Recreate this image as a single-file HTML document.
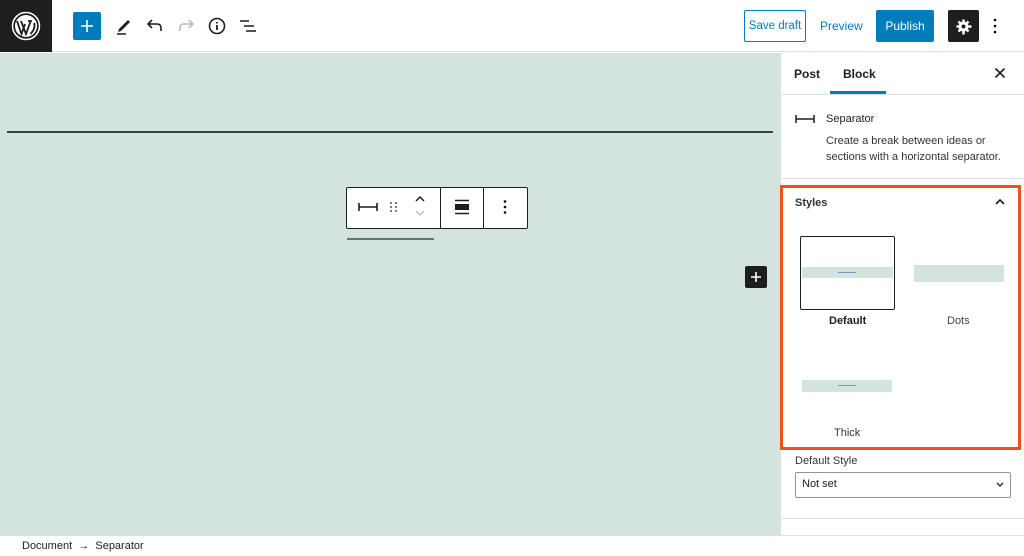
<!DOCTYPE html>
<html><head><style>
*{box-sizing:border-box;margin:0;padding:0}
body{width:1024px;height:556px;overflow:hidden;font-family:"Liberation Sans",sans-serif;background:#fff;position:relative;color:#1e1e1e}
.a{position:absolute}
</style></head><body>
<div class="a" style="left:0;top:0;width:1024px;height:52px;background:#fff;border-bottom:1px solid #e0e0e0"></div>
<div class="a" style="left:0;top:0;width:52px;height:52px;background:#1e1e1e"></div>
<svg class="a" style="left:11px;top:11px" width="30" height="30" viewBox="0 0 30 30"><circle cx="15" cy="15" r="13.5" fill="none" stroke="#fff" stroke-width="1.5"/><circle cx="15" cy="15" r="11" fill="#fff"/><path d="M6 10 L10.5 23 L14 13 M10 10 L15 23 L19 12 Q20 10 18 10 M17 10 L21 10 M23 12 Q25 17 19.5 23" stroke="#1e1e1e" stroke-width="1.8" fill="none"/></svg>
<div class="a" style="left:73px;top:12px;width:28px;height:28px;background:#007cba;border-radius:2px"></div>
<svg class="a" style="left:79px;top:18px" width="16" height="16"><path d="M8 2v12M2 8h12" stroke="#fff" stroke-width="1.6"/></svg>
<svg class="a" style="left:114px;top:16px" width="20" height="20"><path d="M5 13 L14 4 L16 6 L7 15 L4 16Z" fill="#1e1e1e"/><path d="M3 18h9" stroke="#1e1e1e" stroke-width="1.5"/></svg>
<svg class="a" style="left:145px;top:16px" width="20" height="20"><path d="M7 4 L3 8 L7 12 M3 8 H12 Q16 8 16 12 V15" stroke="#1e1e1e" stroke-width="1.6" fill="none"/></svg>
<svg class="a" style="left:176px;top:16px" width="20" height="20"><path d="M13 4 L17 8 L13 12 M17 8 H8 Q4 8 4 12 V15" stroke="#bbb" stroke-width="1.6" fill="none"/></svg>
<svg class="a" style="left:207px;top:16px" width="20" height="20"><circle cx="10" cy="10" r="7.5" stroke="#1e1e1e" stroke-width="1.6" fill="none"/><path d="M10 9v5M10 6v1.5" stroke="#1e1e1e" stroke-width="1.8"/></svg>
<svg class="a" style="left:238px;top:16px" width="20" height="20"><path d="M2 5h9M6 10h10M8 15h10" stroke="#1e1e1e" stroke-width="1.6"/></svg>
<div class="a" style="left:744px;top:10px;width:62px;height:32px;border:1px solid #007cba;border-radius:2px;color:#007cba;font-size:11.5px;line-height:30px;text-align:center;white-space:nowrap">Save draft</div>
<div class="a" style="left:820px;top:19px;color:#007cba;font-size:12px">Preview</div>
<div class="a" style="left:876px;top:10px;width:58px;height:32px;background:#007cba;border-radius:2px;color:#fff;font-size:12px;line-height:32px;text-align:center">Publish</div>
<div class="a" style="left:948px;top:10px;width:31px;height:32px;background:#1e1e1e;border-radius:2px"></div>
<svg class="a" style="left:955px;top:18px" width="17" height="17" viewBox="0 0 17 17"><circle cx="8.5" cy="8.5" r="5" fill="#fff"/><path d="M8.5 1.5v15M1.5 8.5h15M3.5 3.5l10 10M13.5 3.5l-10 10" stroke="#fff" stroke-width="2.5"/><circle cx="8.5" cy="8.5" r="2" fill="#1e1e1e"/></svg>
<svg class="a" style="left:990px;top:16px" width="10" height="20"><circle cx="5" cy="4" r="1.3"/><circle cx="5" cy="10" r="1.3"/><circle cx="5" cy="16" r="1.3"/></svg>
<div class="a" style="left:0;top:53px;width:780px;height:482px;background:#d3e3dd"></div>
<div class="a" style="left:7px;top:131px;width:766px;height:2px;background:#3b3f42"></div>
<div class="a" style="left:346px;top:187px;width:182px;height:42px;background:#fff;border:1px solid #1e1e1e;border-radius:2px"></div>
<div class="a" style="left:440px;top:188px;width:1px;height:40px;background:#1e1e1e"></div>
<div class="a" style="left:483px;top:188px;width:1px;height:40px;background:#1e1e1e"></div>
<svg class="a" style="left:358px;top:200px" width="20" height="14"><path d="M1 3v8M19 3v8M1 7h18" stroke="#1e1e1e" stroke-width="1.6"/></svg>
<svg class="a" style="left:388px;top:200px" width="12" height="14" fill="#555"><circle cx="3" cy="3" r="1"/><circle cx="8" cy="3" r="1"/><circle cx="3" cy="7" r="1"/><circle cx="8" cy="7" r="1"/><circle cx="3" cy="11" r="1"/><circle cx="8" cy="11" r="1"/></svg>
<svg class="a" style="left:413px;top:193px" width="14" height="28"><path d="M3 8l4-4 4 4" stroke="#1e1e1e" stroke-width="1.5" fill="none"/><path d="M3 18l4 4 4-4" stroke="#bbb" stroke-width="1.3" fill="none"/></svg>
<svg class="a" style="left:454px;top:199px" width="16" height="16"><path d="M1 1.5h14M1 14.5h14" stroke="#1e1e1e" stroke-width="1.5"/><rect x="1" y="5" width="14" height="6" fill="#1e1e1e"/></svg>
<svg class="a" style="left:500px;top:199px" width="10" height="16"><circle cx="5" cy="2.5" r="1.3"/><circle cx="5" cy="8" r="1.3"/><circle cx="5" cy="13.5" r="1.3"/></svg>
<div class="a" style="left:347px;top:238px;width:87px;height:2px;background:#6b7073"></div>
<div class="a" style="left:745px;top:266px;width:22px;height:22px;background:#1e1e1e;border-radius:2px"></div>
<svg class="a" style="left:749px;top:270px" width="14" height="14"><path d="M7 2v10M2 7h10" stroke="#fff" stroke-width="1.6"/></svg>
<div class="a" style="left:780px;top:53px;width:1px;height:482px;background:#e0e0e0"></div>
<div class="a" style="left:794px;top:67px;font-size:12px;font-weight:bold">Post</div>
<div class="a" style="left:843px;top:67px;font-size:12px;font-weight:bold">Block</div>
<div class="a" style="left:830px;top:91px;width:56px;height:3px;background:#007cba"></div>
<div class="a" style="left:781px;top:94px;width:243px;height:1px;background:#e0e0e0"></div>
<svg class="a" style="left:994px;top:67px" width="12" height="12"><path d="M1.5 1.5l9 9M10.5 1.5l-9 9" stroke="#1e1e1e" stroke-width="1.6"/></svg>
<svg class="a" style="left:795px;top:113px" width="20" height="12"><path d="M1 2v8M19 2v8M1 6h18" stroke="#1e1e1e" stroke-width="1.5"/></svg>
<div class="a" style="left:826px;top:113px;font-size:11px;font-weight:500">Separator</div>
<div class="a" style="left:826px;top:133px;font-size:11px;line-height:16px;color:#333;width:195px">Create a break between ideas or sections with a horizontal separator.</div>
<div class="a" style="left:781px;top:178px;width:243px;height:1px;background:#e0e0e0"></div>
<div class="a" style="left:780px;top:185px;width:241px;height:265px;border:3px solid #f2501b"></div>
<div class="a" style="left:795px;top:197px;font-size:11px;font-weight:bold;color:#333">Styles</div>
<svg class="a" style="left:994px;top:197px" width="12" height="10"><path d="M2 7l4-4 4 4" stroke="#1e1e1e" stroke-width="1.6" fill="none"/></svg>
<div class="a" style="left:800px;top:236px;width:95px;height:74px;border:1px solid #1e1e1e;border-radius:2px;background:#fff"></div>
<div class="a" style="left:802px;top:267px;width:91px;height:11px;background:#d3e3dd"></div>
<div class="a" style="left:838px;top:272px;width:18px;height:1px;background:#7a9bc4"></div>
<div class="a" style="left:829px;top:315px;font-size:11px;font-weight:bold">Default</div>
<div class="a" style="left:914px;top:265px;width:90px;height:17px;background:#d3e3dd"></div>
<div class="a" style="left:947px;top:315px;font-size:11px;color:#444">Dots</div>
<div class="a" style="left:802px;top:380px;width:90px;height:12px;background:#d3e3dd"></div>
<div class="a" style="left:838px;top:385px;width:18px;height:1px;background:#7a9bc4"></div>
<div class="a" style="left:834px;top:427px;font-size:11px;color:#333">Thick</div>
<div class="a" style="left:795px;top:455px;font-size:11px;color:#333">Default Style</div>
<div class="a" style="left:795px;top:472px;width:216px;height:26px;border:1px solid #949494;border-radius:2px"></div>
<div class="a" style="left:802px;top:478px;font-size:11px">Not set</div>
<svg class="a" style="left:995px;top:481px" width="10" height="8"><path d="M2 2l3 3 3-3" stroke="#1e1e1e" stroke-width="1.3" fill="none"/></svg>
<div class="a" style="left:781px;top:518px;width:243px;height:1px;background:#e0e0e0"></div>
<div class="a" style="left:0;top:535px;width:1024px;height:1px;background:#e0e0e0"></div>
<div class="a" style="left:22px;top:540px;font-size:11px;color:#1e1e1e">Document &nbsp;→&nbsp; Separator</div>
</body></html>
